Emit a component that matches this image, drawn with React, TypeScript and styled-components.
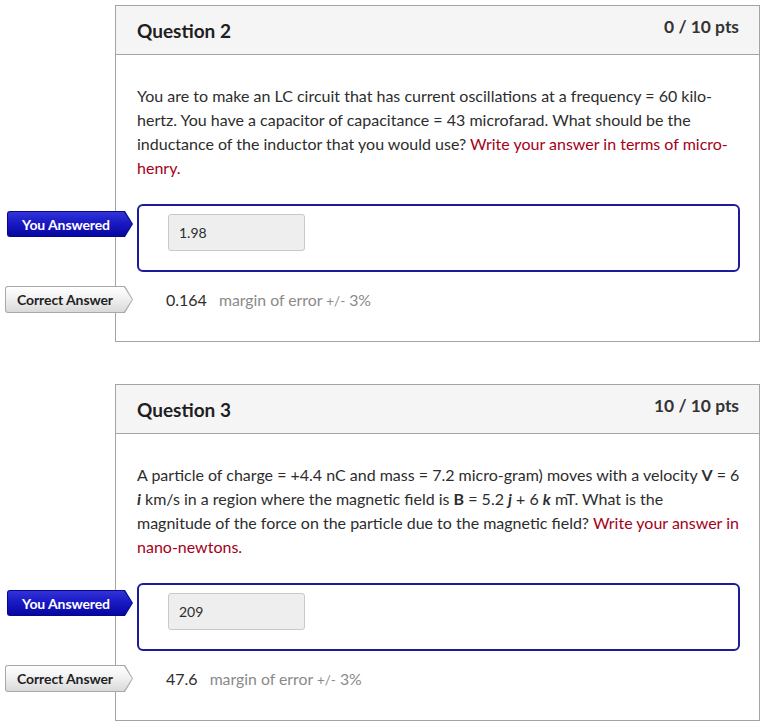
import React from 'react';
import styled, { createGlobalStyle } from 'styled-components';

const GlobalStyle = createGlobalStyle`
  html, body {
    margin: 0;
    padding: 0;
    background: #ffffff;
  }
  body {
    font-family: Lato, "Open Sans", "Liberation Sans", sans-serif;
    color: #2d3b45;
  }
`;

const Page = styled.div`
  display: flex;
  flex-direction: column;
  gap: 42px;
  padding: 5px 0 0 115px;
`;

const Card = styled.section`
  width: 645px;
  box-sizing: border-box;
  border: 1px solid #a4a4a4;
  background: #fff;
`;

const Header = styled.header`
  height: 49px;
  box-sizing: border-box;
  display: flex;
  justify-content: space-between;
  align-items: flex-start;
  padding: 0 20px 0 21px;
  background: #f5f5f5;
  border-bottom: 1px solid #a4a4a4;
`;

const Title = styled.h2`
  margin: 14px 0 0;
  font-size: 19px;
  line-height: 22px;
  font-weight: 700;
  color: #1f1f1f;
`;

const Points = styled.div`
  margin-top: 11px;
  font-size: 17.4px;
  line-height: 20px;
  font-weight: 700;
  color: #333;
`;

const Body = styled.div`
  padding: 29px 16px 28px 21px;
`;

const Text = styled.p`
  max-width: 602.5px;
  margin: 0;
  font-size: 16px;
  line-height: 24px;
  color: #2d2d2d;
`;

const Hint = styled.span`
  color: #a50018;
`;

const Answers = styled.div`
  margin-top: 24px;
  margin-right: 3px;
  display: flex;
  flex-direction: column;
  gap: 14px;
`;

const AnswerRow = styled.div`
  position: relative;
`;

const Badge = styled.div<{ $correct?: boolean }>`
  position: absolute;
  top: ${({ $correct }) => ($correct ? '0' : '7px')};
  right: calc(100% + 4px);
  width: ${({ $correct }) => ($correct ? '128px' : '126px')};
  height: ${({ $correct }) => ($correct ? '27px' : '26px')};
  border-radius: 3px 0 0 3px;
  background: ${({ $correct }) => ($correct ? '#a8a8a8' : '#06068f')};
  clip-path: polygon(0 0, calc(100% - 8px) 0, 100% 50%, calc(100% - 8px) 100%, 0 100%);

  &::before {
    content: '';
    position: absolute;
    inset: 1px 1px 1px 1px;
    border-radius: 2px 0 0 2px;
    background: ${({ $correct }) =>
      $correct
        ? 'linear-gradient(#ffffff, #f1f1f1 45%, #d9d9d9)'
        : 'linear-gradient(#3333d9, #1a1ac4 45%, #0707a3)'};
    clip-path: polygon(0 0, calc(100% - 8px) 0, 100% 50%, calc(100% - 8px) 100%, 0 100%);
  }
`;

const BadgeLabel = styled.span<{ $correct?: boolean }>`
  position: relative;
  display: flex;
  align-items: center;
  justify-content: center;
  height: 100%;
  padding-right: 8px;
  font-size: 14px;
  font-weight: 700;
  letter-spacing: -0.1px;
  color: ${({ $correct }) => ($correct ? '#1f1f1f' : '#ffffff')};
`;

const AnswerBox = styled.div`
  height: 68px;
  box-sizing: border-box;
  padding: 8px 0 0 29px;
  border: 2px solid #1b1b9c;
  border-radius: 6px;
`;

const Input = styled.div`
  width: 137px;
  height: 37px;
  box-sizing: border-box;
  display: flex;
  align-items: center;
  padding-left: 10px;
  background: #eeeeee;
  border: 1px solid #c9c9c9;
  border-radius: 3px;
  font-size: 14px;
  color: #2d2d2d;
`;

const CorrectLine = styled.div`
  height: 27px;
  display: flex;
  align-items: center;
  gap: 12px;
  padding-left: 29px;
`;

const Value = styled.span`
  font-size: 16px;
  color: #2d2d2d;
`;

const Margin = styled.span`
  font-size: 15.8px;
  color: #8a8a8a;
`;

const Small = styled.span`
  font-size: 13.5px;
`;

type QuestionProps = {
  title: string;
  points: string;
  answered: string;
  correct: string;
  children: React.ReactNode;
};

const Question: React.FC<QuestionProps> = ({ title, points, answered, correct, children }) => (
  <Card>
    <Header>
      <Title>{title}</Title>
      <Points>{points}</Points>
    </Header>
    <Body>
      <Text>{children}</Text>
      <Answers>
        <AnswerRow>
          <Badge>
            <BadgeLabel>You Answered</BadgeLabel>
          </Badge>
          <AnswerBox>
            <Input>{answered}</Input>
          </AnswerBox>
        </AnswerRow>
        <AnswerRow>
          <Badge $correct>
            <BadgeLabel $correct>Correct Answer</BadgeLabel>
          </Badge>
          <CorrectLine>
            <Value>{correct}</Value>
            <Margin>
              margin of error <Small>+/-</Small> 3%
            </Margin>
          </CorrectLine>
        </AnswerRow>
      </Answers>
    </Body>
  </Card>
);

const App: React.FC = () => (
  <>
    <GlobalStyle />
    <Page>
      <Question title="Question 2" points="0 / 10 pts" answered="1.98" correct="0.164">
        You are to make an LC circuit that has current oscillations at a frequency = 60 kilo-hertz. You
        have a capacitor of capacitance = 43 microfarad. What should be the inductance of the inductor
        that you would use? <Hint>Write your answer in terms of micro-henry.</Hint>
      </Question>
      <Question title="Question 3" points="10 / 10 pts" answered="209" correct="47.6">
        A particle of charge = +4.4 nC and mass = 7.2 micro-gram) moves with a velocity <b>V</b> = 6{' '}
        <b><i>i</i></b> km/s in a region where the magnetic field is <b>B</b> = 5.2 <b><i>j</i></b> + 6{' '}
        <b><i>k</i></b> mT. What is the magnitude of the force on the particle due to the magnetic
        field? <Hint>Write your answer in nano-newtons.</Hint>
      </Question>
    </Page>
  </>
);

export default App;
